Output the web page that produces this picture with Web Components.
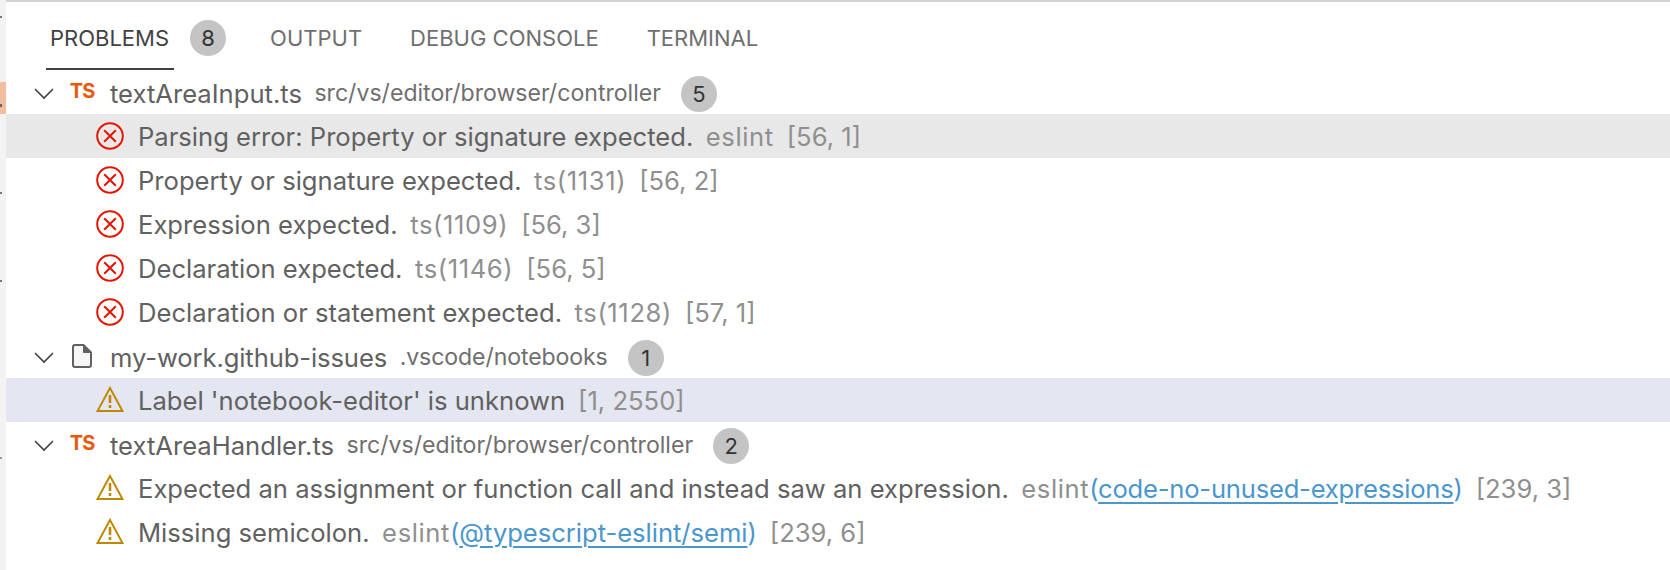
<!DOCTYPE html>
<html>
<head>
<meta charset="utf-8">
<style>
  html, body { margin: 0; background: #fff; }
  body { font-family: Inter, "Liberation Sans", sans-serif; }
</style>
</head>
<body>

<problems-panel>
  <panel-tab slot="tabs" active count="8">PROBLEMS</panel-tab>
  <panel-tab slot="tabs">OUTPUT</panel-tab>
  <panel-tab slot="tabs">DEBUG CONSOLE</panel-tab>
  <panel-tab slot="tabs">TERMINAL</panel-tab>

  <problem-group name="textAreaInput.ts" path="src/vs/editor/browser/controller" count="5" icon="ts">
    <problem-row kind="error" state="focus" source="eslint" pos="[56, 1]">Parsing error: Property or signature expected.</problem-row>
    <problem-row kind="error" source="ts(1131)" pos="[56, 2]">Property or signature expected.</problem-row>
    <problem-row kind="error" source="ts(1109)" pos="[56, 3]">Expression expected.</problem-row>
    <problem-row kind="error" source="ts(1146)" pos="[56, 5]">Declaration expected.</problem-row>
    <problem-row kind="error" source="ts(1128)" pos="[57, 1]">Declaration or statement expected.</problem-row>
  </problem-group>

  <problem-group name="my-work.github-issues" path=".vscode/notebooks" count="1" icon="file" style="--head-track: -0.1px">
    <problem-row kind="warning" state="selected" pos="[1, 2550]">Label 'notebook-editor' is unknown</problem-row>
  </problem-group>

  <problem-group name="textAreaHandler.ts" path="src/vs/editor/browser/controller" count="2" icon="ts">
    <problem-row kind="warning" source="eslint" code="code-no-unused-expressions" pos="[239, 3]" style="--code-track: -0.22px">Expected an assignment or function call and instead saw an expression.</problem-row>
    <problem-row kind="warning" source="eslint" code="@typescript-eslint/semi" pos="[239, 6]" style="--code-track: -0.03px">Missing semicolon.</problem-row>
  </problem-group>
</problems-panel>

<script>
const badgeCss = `
  .badge {
    display: inline-flex;
    align-items: center;
    justify-content: center;
    width: 36px;
    height: 36px;
    border-radius: 50%;
    background: #c4c4c4;
    color: #333;
    font-size: 22px;
    flex: none;
  }
`;

class ProblemsPanel extends HTMLElement {
    constructor() {
        super();
        this.attachShadow({ mode: 'open' });
    }

    connectedCallback() {
        this.shadowRoot.innerHTML = `
      <style>
        :host {
          display: flex;
          width: 1670px;
          height: 570px;
          overflow: hidden;
          background: #fff;
          font-family: Inter, "Liberation Sans", sans-serif;
        }
        .gutter {
          width: 6px;
          flex: none;
          background-color: #f3f3f3;
          background-image:
            linear-gradient(#777, #777), linear-gradient(#777, #777),
            linear-gradient(#777, #777), linear-gradient(#999, #999);
          background-repeat: no-repeat;
          background-size: 2px 2px;
          background-position: 0 16px, 0 192px, 0 280px, 0 457px;
          display: flex;
          flex-direction: column;
        }
        .gutter .mark {
          height: 32px;
          margin-top: 82px;
          background: linear-gradient(#666, #666) no-repeat 0 22px / 2px 3px, #f1bf9f;
        }
        .main {
          flex: 1;
          min-width: 0;
          display: flex;
          flex-direction: column;
          border-top: 2px solid #d4d4d4;
        }
        .tabs {
          height: 68px;
          display: flex;
          padding-left: 40px;
          flex: none;
        }
      </style>
      <div class="gutter"><div class="mark"></div></div>
      <div class="main">
        <div class="tabs"><slot name="tabs"></slot></div>
        <slot></slot>
      </div>
    `;
    }
}

class PanelTab extends HTMLElement {
    constructor() {
        super();
        this.attachShadow({ mode: 'open' });
    }

    connectedCallback() {
        const count = this.getAttribute('count');
        this.shadowRoot.innerHTML = `
      <style>
        :host {
          display: flex;
          align-items: center;
          height: 68px;
          box-sizing: border-box;
          padding: 4px 0 0 4px;
          margin-right: 44px;
          font-size: 22px;
          color: #6f6f6f;
        }
        :host([active]) { color: #424242; margin-right: 40px; }
        .label {
          display: flex;
          align-items: center;
          height: 64px;
          position: relative;
        }
        :host([active]) .label::after {
          content: '';
          position: absolute;
          left: -4px;
          right: -5px;
          bottom: 0;
          height: 2px;
          background: #424242;
        }
        ${badgeCss}
        .badge { margin-left: 21px; }
      </style>
      <span class="label"><slot></slot></span>
      ${count ? `<span class="badge">${count}</span>` : ''}
    `;
    }
}

class ProblemGroup extends HTMLElement {
    constructor() {
        super();
        this.attachShadow({ mode: 'open' });
    }

    connectedCallback() {
        const icon = this.getAttribute('icon') === 'ts'
            ? `<span class="ts">TS</span>`
            : `<svg class="file" width="20" height="24" viewBox="0 0 20 24" fill="#f6f6f6" stroke="#616161" stroke-width="2">
                 <path d="M3 1h8.5L19 8.5V21a2 2 0 0 1-2 2H3a2 2 0 0 1-2-2V3a2 2 0 0 1 2-2z"/>
                 <path d="M11.5 1L19 8.5h-7.5z" fill="#616161" stroke-width="1"/>
               </svg>`;
        this.shadowRoot.innerHTML = `
      <style>
        :host { display: block; }
        .head {
          height: 44px;
          display: flex;
          align-items: center;
          color: #616161;
          font-size: 25.6px;
          white-space: nowrap;
        }
        .twisty { margin-left: 28px; margin-top: 3px; flex: none; display: block; }
        .icon {
          width: 24px;
          margin-left: 16px;
          margin-right: 16px;
          display: flex;
          justify-content: center;
          flex: none;
        }
        .ts {
          color: #e8590c;
          font-weight: 700;
          font-size: 20px;
          letter-spacing: -1px;
          position: relative;
          top: -1px;
        }
        .name, .path { margin-top: 2px; letter-spacing: var(--head-track, 0); }
        .path { margin-left: 12.5px; font-size: 23.1px; color: #6f6f6f; }
        ${badgeCss}
        .badge { margin-left: 20px; margin-top: 4px; }
      </style>
      <div class="head">
        <svg class="twisty" width="20" height="12" viewBox="0 0 20 12" fill="none" stroke="#424242" stroke-width="1.6"><path d="M1 1l9 9 9-9"/></svg>
        <span class="icon">${icon}</span>
        <span class="name">${this.getAttribute('name')}</span>
        <span class="path">${this.getAttribute('path')}</span>
        <span class="badge">${this.getAttribute('count')}</span>
      </div>
      <slot></slot>
    `;
    }
}

class ProblemRow extends HTMLElement {
    constructor() {
        super();
        this.attachShadow({ mode: 'open' });
    }

    connectedCallback() {
        const kind = this.getAttribute('kind');
        const source = this.getAttribute('source');
        const code = this.getAttribute('code');
        const icon = kind === 'error'
            ? `<svg width="28" height="28" viewBox="0 0 28 28" fill="none" stroke="#e51400" stroke-width="2"><circle cx="14" cy="14" r="12.8"/><path d="M8.2 8.2l11.6 11.6M19.8 8.2L8.2 19.8"/></svg>`
            : `<svg width="28" height="28" viewBox="0 0 28 28" fill="none" stroke="#bf8803" stroke-width="2"><path d="M14 2L1.5 25h25z"/><path d="M14 9v8M14 19v3" stroke-width="2.6"/></svg>`;
        this.shadowRoot.innerHTML = `
      <style>
        :host {
          display: flex;
          align-items: center;
          height: 44px;
          padding-left: 90px;
          color: #616161;
          font-size: 25.6px;
          white-space: nowrap;
        }
        :host([state="focus"]) { background: #e8e8e8; }
        :host([state="selected"]) { background: #e4e6f1; }
        svg { flex: none; margin-right: 14px; }
        .meta { color: #8f8f8f; margin-left: 12.5px; letter-spacing: 0.6px; }
        .pos { color: #8f8f8f; margin-left: 13px; }
        .code { color: #4a96cd; letter-spacing: var(--code-track, 0); }
        .code u { text-decoration-thickness: 2px; text-underline-offset: 4px; }
      </style>
      ${icon}
      <span class="msg"><slot></slot></span>
      ${source ? `<span class="meta">${source}${code ? `<span class="code">(<u>${code}</u>)</span>` : ''}</span>` : ''}
      <span class="pos">${this.getAttribute('pos')}</span>
    `;
    }
}

customElements.define('problems-panel', ProblemsPanel);
customElements.define('panel-tab', PanelTab);
customElements.define('problem-group', ProblemGroup);
customElements.define('problem-row', ProblemRow);
</script>
</body>
</html>
